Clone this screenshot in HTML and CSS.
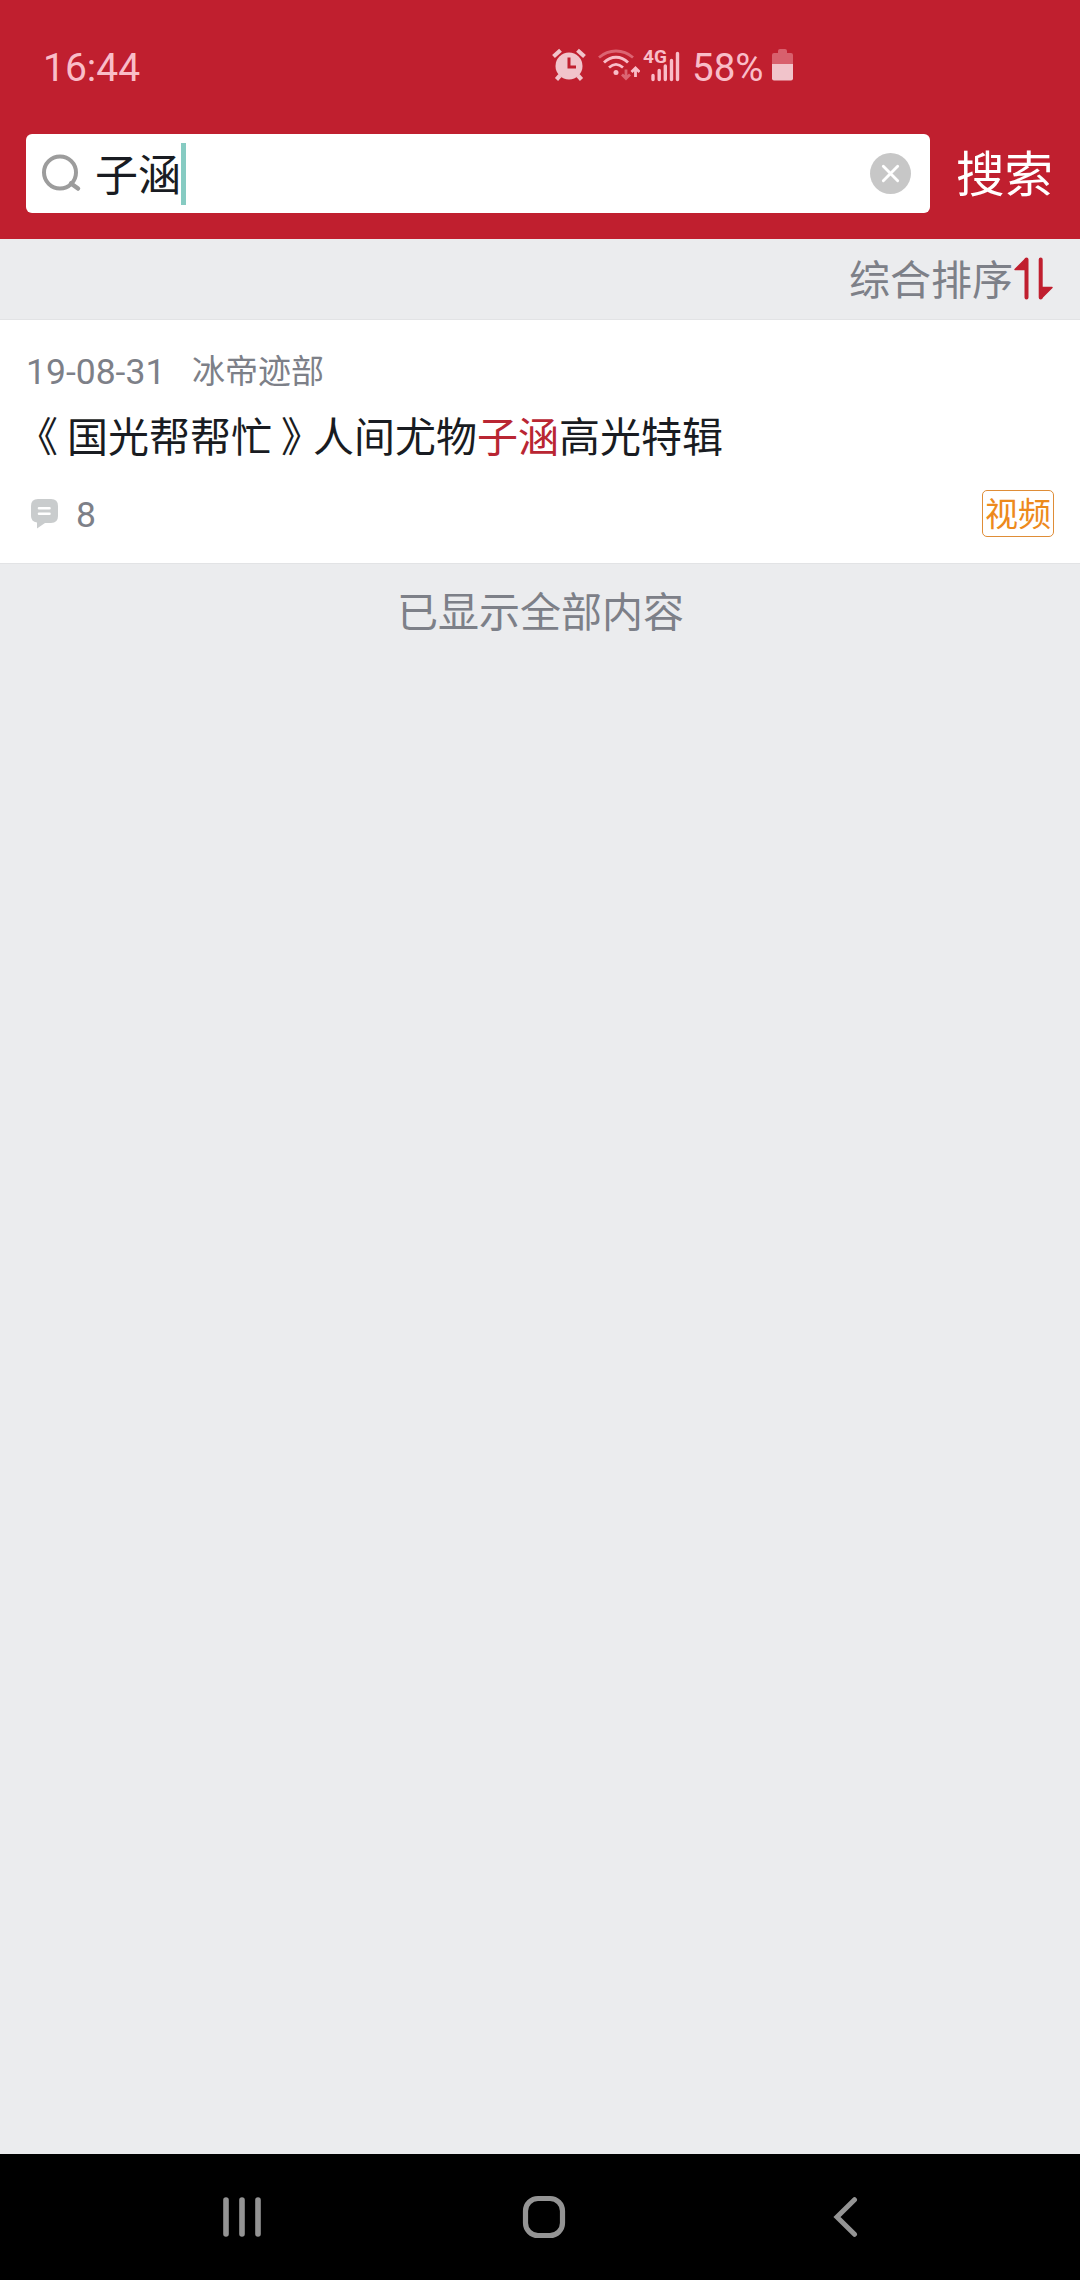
FILE: index.html
```html
<!DOCTYPE html>
<html lang="zh-CN">
<head>
<meta charset="utf-8">
<title>搜索</title>
<link rel="stylesheet" href="styles.css">
</head>
<body>
<div class="screen">
  <header class="header">
    <div class="status">
      <span class="time">16:44</span>
      <div class="indicators">
        <svg class="alarm" width="34" height="34" viewBox="0 0 34 34">
          <g fill="none" stroke="#f1c4cb" stroke-width="4.2"><path d="M1.5 8.5 8.5 2.3M32.500 8.500 25.500 2.300"/><path d="M8 27.500 4.500 31.500M26 27.500 29.500 31.500"/></g>
          <circle cx="17" cy="18" r="13.500" fill="#f1c4cb"/>
          <path d="M17 9.500V19h7" fill="none" stroke="#c01f2f" stroke-width="3"/>
        </svg>
        <svg class="wifi" width="42" height="34" viewBox="0 0 42 34">
          <g fill="none" stroke="#f9bdc8" stroke-width="2.800">
            <path d="M1 9.500C11 .8 25 .8 35 9.500" stroke="#dc6472"/>
            <path d="M6 14.500C13 7.500 23 7.500 30 14.500M11 19.500c4.500-4 9.500-4 14 0"/>
            <path d="M28 21.500v9M24 26.500l4 4 4-4" stroke="#dc6472"/>
            <path d="M37.500 29v-9M33.500 24l4-4 4 4"/>
          </g>
          <circle cx="18" cy="24.500" r="2.500" fill="#f9bdc8"/>
        </svg>
        <svg class="signal" width="38" height="38" viewBox="0 -4 38 38">
          <text class="network" x="0" y="15">4G</text>
          <path d="M10 27.500v4M16.200 22.500v9M22.300 18v13.500M28.500 12.500v19M34.500 5.500v26" fill="none" stroke="#f9bdc8" stroke-width="3.400" stroke-linecap="round"/>
        </svg>
        <span class="percent">58%</span>
        <svg class="battery" width="21" height="34" viewBox="0 0 21 34">
          <path d="M0 17V7q0-2 2-2h4V3q0-2 2-2h5q2 0 2 2v2h4q2 0 2 2v10z" fill="#d8606d"/>
          <path d="M0 16h21v14.500q0 2-2 2H2q-2 0-2-2z" fill="#f1c4cb"/>
        </svg>
      </div>
    </div>
    <div class="search-row">
      <div class="search-box">
        <svg class="search-icon" width="42" height="40" viewBox="0 0 42 40"><g fill="none" stroke="#9c9c9c" stroke-width="4"><circle cx="20" cy="18.500" r="16"/><path d="M31 29.500l7 5" stroke-width="4.500" stroke-linecap="round"/></g></svg>
        <span class="query">子涵</span><span class="caret"></span>
        <svg class="clear" width="41" height="41" viewBox="0 0 40 40"><circle cx="20" cy="20" r="20" fill="#c7c7c7"/><path d="M13 13l14 14M27 13 13 27" stroke="#fff" stroke-width="2.800" stroke-linecap="round"/></svg>
      </div>
      <span class="submit">搜索</span>
    </div>
  </header>
  <div class="sort">
    <span>综合排序</span>
    <svg width="40" height="44" viewBox="0 0 40 44"><g fill="#c01f2f" stroke="#c01f2f" stroke-linejoin="round" stroke-linecap="round"><path d="M13.500 2.500v38M27.700 2.500v38" stroke-width="4"/><path d="M12.500 2v10.500H2zM28.500 30.500H39L28.500 41z" stroke-width="1.500"/></g></svg>
  </div>
  <article class="result">
    <div class="meta"><span class="date">19-08-31</span><span class="author">冰帝迹部</span></div>
    <h1 class="title"><span class="open">《</span>国光帮帮忙<span class="close">》</span>人间尤物<em>子涵</em>高光特辑</h1>
    <div class="foot">
      <svg width="27" height="30" viewBox="0 0 27 30"><path d="M7 0h13q7 0 7 7v10q0 7-7 7h-6l-8 5.500V23.500Q0 22.500 0 17V7q0-7 7-7z" fill="#c9cccd"/><path d="M8 9.200h10.500M8 14.800h10.500" stroke="#fff" stroke-width="2.600" stroke-linecap="round"/></svg>
      <span class="count">8</span>
      <span class="tag">视频</span>
    </div>
  </article>
  <p class="end">已显示全部内容</p>
  <nav class="nav">
    <svg width="40" height="42" viewBox="0 0 40 42"><path d="M4 4v34M20 4v34M36 4v34" stroke="#949494" stroke-width="5.600" stroke-linecap="round"/></svg>
    <svg class="home" width="44" height="44" viewBox="0 0 44 44"><rect x="3.500" y="3.500" width="37" height="37" rx="12.500" fill="none" stroke="#949494" stroke-width="5.200"/></svg>
    <svg class="back" width="26" height="42" viewBox="0 0 26 42"><path d="M22.500 3.700 5 21l17.500 17.300" fill="none" stroke="#949494" stroke-width="5" stroke-linecap="round"/></svg>
  </nav>
</div>
</body>
</html>
```
FILE: styles.css
```css
* { box-sizing: border-box; }
body { margin: 0; }
svg { display: block; flex: none; }
.screen {
  width: 1080px;
  height: 2280px;
  display: flex;
  flex-direction: column;
  background: #ebecee;
  color: #191c22;
  font-family: Roboto, "Noto Sans CJK SC", sans-serif;
  overflow: hidden;
}
.header { height: 239px; flex: none; background: #c01f2f; }
.status {
  height: 134px;
  display: flex;
  padding: 43px 0 0 43px;
  color: #f9bdc8;
}
.time { width: 509px; padding-top: 1px; font-size: 39px; line-height: 48px; }
.indicators { display: flex; align-items: flex-start; }
.alarm, .wifi, .battery { margin-top: 5px; }
.wifi { margin-left: 12px; }
.signal { margin-top: 1px; margin-left: 3px; }
.network { font: 700 19px Roboto, sans-serif; fill: #f9bdc8; }
.percent { width: 80px; margin-left: 11px; padding-top: 1px; font-size: 38.5px; line-height: 48px; }
.search-row { display: flex; padding: 0 26px; }
.search-box {
  width: 904px;
  height: 79px;
  display: flex;
  align-items: center;
  padding: 0 19px 0 14px;
  border-radius: 6px;
  background: #fff;
}
.query { margin-left: 13px; padding-top: 5px; font-size: 43px; line-height: 74px; }
.caret { width: 5px; height: 62px; background: #86cbc2; }
.clear { margin-left: auto; }
.submit { margin-left: 26px; color: #fff; font-size: 48.5px; line-height: 83px; white-space: nowrap; }
.sort {
  height: 81px;
  flex: none;
  display: flex;
  justify-content: flex-end;
  align-items: center;
  padding-right: 27px;
  border-bottom: 1px solid #e2e3e5;
  color: #7d8088;
  font-size: 41px;
}
.sort span { padding-top: 5px; line-height: 75px; }
.result {
  height: 243px;
  flex: none;
  padding: 27px 26px 0;
  background: #fff;
}
.meta { height: 50px; display: flex; color: #7d8088; line-height: 50px; }
.date { width: 166px; font-size: 35.5px; }
.author { font-size: 33px; }
.title { height: 60px; margin: 11px 0 0; font-size: 41px; font-weight: 400; line-height: 60px; white-space: nowrap; }
.title em { font-style: normal; color: #b92633; }
.open, .close { font-feature-settings: "halt"; }
.open { margin-left: 11.5px; margin-right: 9px; }
.close { margin-left: 9px; margin-right: 11.5px; }
.foot { height: 47px; margin-top: 22px; padding-left: 5px; display: flex; align-items: center; color: #7d8088; }
.count { margin-left: 18px; padding-top: 3px; font-size: 35.5px; line-height: 44px; }
.tag {
  width: 72px;
  height: 47px;
  margin-left: auto;
  border: 1px solid #df8d37;
  border-radius: 5px;
  color: #ed8a1c;
  font-size: 33px;
  line-height: 48px;
  text-align: center;
}
.end { margin: 0; padding: 19px 0 0 1px; border-top: 1px solid #e2e3e5; color: #7d8088; font-size: 41px; line-height: 60px; text-align: center; }
.nav {
  height: 126px;
  margin-top: auto;
  flex: none;
  display: flex;
  align-items: center;
  padding-left: 222px;
  background: #000;
}
.home { margin-left: 260px; }
.back { margin-left: 266px; }
```
